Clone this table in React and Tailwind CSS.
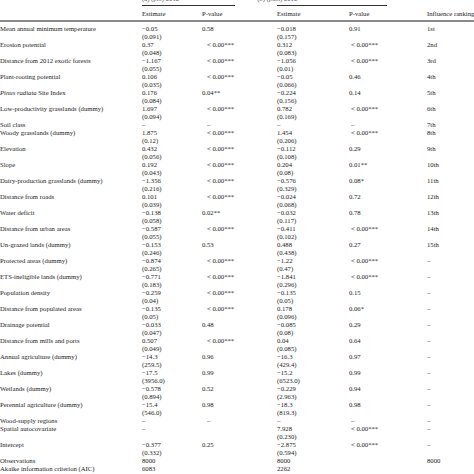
import React from 'react';

const ROWS = [
  ['Mean annual minimum temperature', '−0.05', '(0.091)', '0.58', '−0.018', '(0.157)', '0.91', '1st'],
  ['Erosion potential', '0.37', '(0.048)', '< 0.00***', '0.312', '(0.083)', '< 0.00***', '2nd'],
  ['Distance from 2012 exotic forests', '−1.167', '(0.055)', '< 0.00***', '−1.056', '(0.01)', '< 0.00***', '3rd'],
  ['Plant-rooting potential', '0.106', '(0.035)', '< 0.00***', '−0.05', '(0.066)', '0.46', '4th'],
  ['pinus', '0.176', '(0.084)', '0.04**', '−0.224', '(0.156)', '0.14', '5th'],
  ['Low-productivity grasslands (dummy)', '1.697', '(0.094)', '< 0.00***', '0.782', '(0.169)', '< 0.00***', '6th'],
  ['Soil class', '–', null, '–', '–', null, '–', '7th'],
  ['Woody grasslands (dummy)', '1.875', '(0.12)', '< 0.00***', '1.454', '(0.206)', '< 0.00***', '8th'],
  ['Elevation', '0.432', '(0.056)', '< 0.00***', '−0.112', '(0.108)', '0.29', '9th'],
  ['Slope', '0.192', '(0.043)', '< 0.00***', '0.204', '(0.08)', '0.01**', '10th'],
  ['Dairy-production grasslands (dummy)', '−1.356', '(0.216)', '< 0.00***', '−0.576', '(0.329)', '0.08*', '11th'],
  ['Distance from roads', '0.101', '(0.039)', '< 0.00***', '−0.024', '(0.068)', '0.72', '12th'],
  ['Water deficit', '−0.138', '(0.058)', '0.02**', '−0.032', '(0.117)', '0.78', '13th'],
  ['Distance from urban areas', '−0.587', '(0.055)', '< 0.00***', '−0.411', '(0.102)', '< 0.00***', '14th'],
  ['Un-grazed lands (dummy)', '−0.153', '(0.246)', '0.53', '0.488', '(0.438)', '0.27', '15th'],
  ['Protected areas (dummy)', '−0.874', '(0.265)', '< 0.00***', '−1.22', '(0.47)', '< 0.00***', '–'],
  ['ETS-ineligible lands (dummy)', '−0.771', '(0.183)', '< 0.00***', '−1.841', '(0.296)', '< 0.00***', '–'],
  ['Population density', '−0.259', '(0.04)', '< 0.00***', '−0.135', '(0.05)', '0.15', '–'],
  ['Distance from populated areas', '−0.135', '(0.05)', '< 0.00***', '0.178', '(0.096)', '0.06*', '–'],
  ['Drainage potential', '−0.033', '(0.047)', '0.48', '−0.085', '(0.08)', '0.29', '–'],
  ['Distance from mills and ports', '0.507', '(0.049)', '< 0.00***', '0.04', '(0.085)', '0.64', '–'],
  ['Annual agriculture (dummy)', '−14.3', '(259.5)', '0.96', '−16.3', '(429.4)', '0.97', '–'],
  ['Lakes (dummy)', '−17.5', '(3956.0)', '0.99', '−15.2', '(6523.0)', '0.99', '–'],
  ['Wetlands (dummy)', '−0.578', '(0.894)', '0.52', '−0.229', '(2.963)', '0.94', '–'],
  ['Perennial agriculture (dummy)', '−15.4', '(546.0)', '0.98', '−18.3', '(819.3)', '0.98', '–'],
  ['Wood-supply regions', '–', null, '–', '–', null, '–', '–'],
  ['Spatial autocovariate', '–', null, '', '7.928', '(0.230)', '< 0.00***', '–'],
  ['Intercept', '−0.377', '(0.332)', '0.25', '−2.875', '(0.594)', '< 0.00***', '–'],
  ['Observations', '8000', null, '', '8000', null, '', '8000'],
  ['Akaike information criterion (AIC)', '6083', null, '', '2262', null, '', ''],
];

const GRID = 'grid grid-cols-[142px_60px_75px_72px_78px_47px]';

function PCell({ value, shift }) {
  const offset = value.startsWith('<') || value === '–';
  return <div className={offset ? shift : ''}>{value}</div>;
}

function Label({ text }) {
  if (text === 'pinus') {
    return (
      <div className="whitespace-nowrap">
        <i>Pinus radiata</i> Site Index
      </div>
    );
  }
  return <div className="whitespace-nowrap">{text}</div>;
}

export default function App() {
  return (
    <div
      className="w-[474px] h-[474px] overflow-hidden bg-white text-[#1c1c1c] text-[6.7px] leading-[8px]"
      style={{ fontFamily: '"Liberation Serif", "Times New Roman", serif' }}
    >
      {/* group titles, cut off at the top edge as in the source */}
      <div className="h-[4px] overflow-hidden flex text-[#555]">
        <div className="ml-[142px] -mt-[5px] whitespace-nowrap">(a) (pre) 2012</div>
        <div className="ml-[78px] -mt-[5px] whitespace-nowrap">(b) (post) 2012</div>
      </div>
      <div className="flex mt-[1px]">
        <div className="ml-[142px] w-[93px] border-t border-[#333]" />
        <div className="ml-[42px] w-[110px] border-t border-[#333]" />
      </div>

      {/* column headers */}
      <div className={`${GRID} mt-[4px]`}>
        <div />
        <div>Estimate</div>
        <div>P-value</div>
        <div>Estimate</div>
        <div>P-value</div>
        <div className="whitespace-nowrap">Influence ranking</div>
      </div>
      <div className="mt-[2px] border-t-2 border-[#8a8a8a]" />

      {/* body */}
      <div className="pt-[3px]">
        {ROWS.map((r) => (
          <div key={r[0]} className={GRID}>
            <Label text={r[0]} />
            <div>
              <div>{r[1]}</div>
              {r[2] && <div>{r[2]}</div>}
            </div>
            <PCell value={r[3]} shift="pl-[5px]" />
            <div>
              <div>{r[4]}</div>
              {r[5] && <div>{r[5]}</div>}
            </div>
            <PCell value={r[6]} shift="pl-[2px]" />
            <div>{r[7]}</div>
          </div>
        ))}
      </div>
    </div>
  );
}
